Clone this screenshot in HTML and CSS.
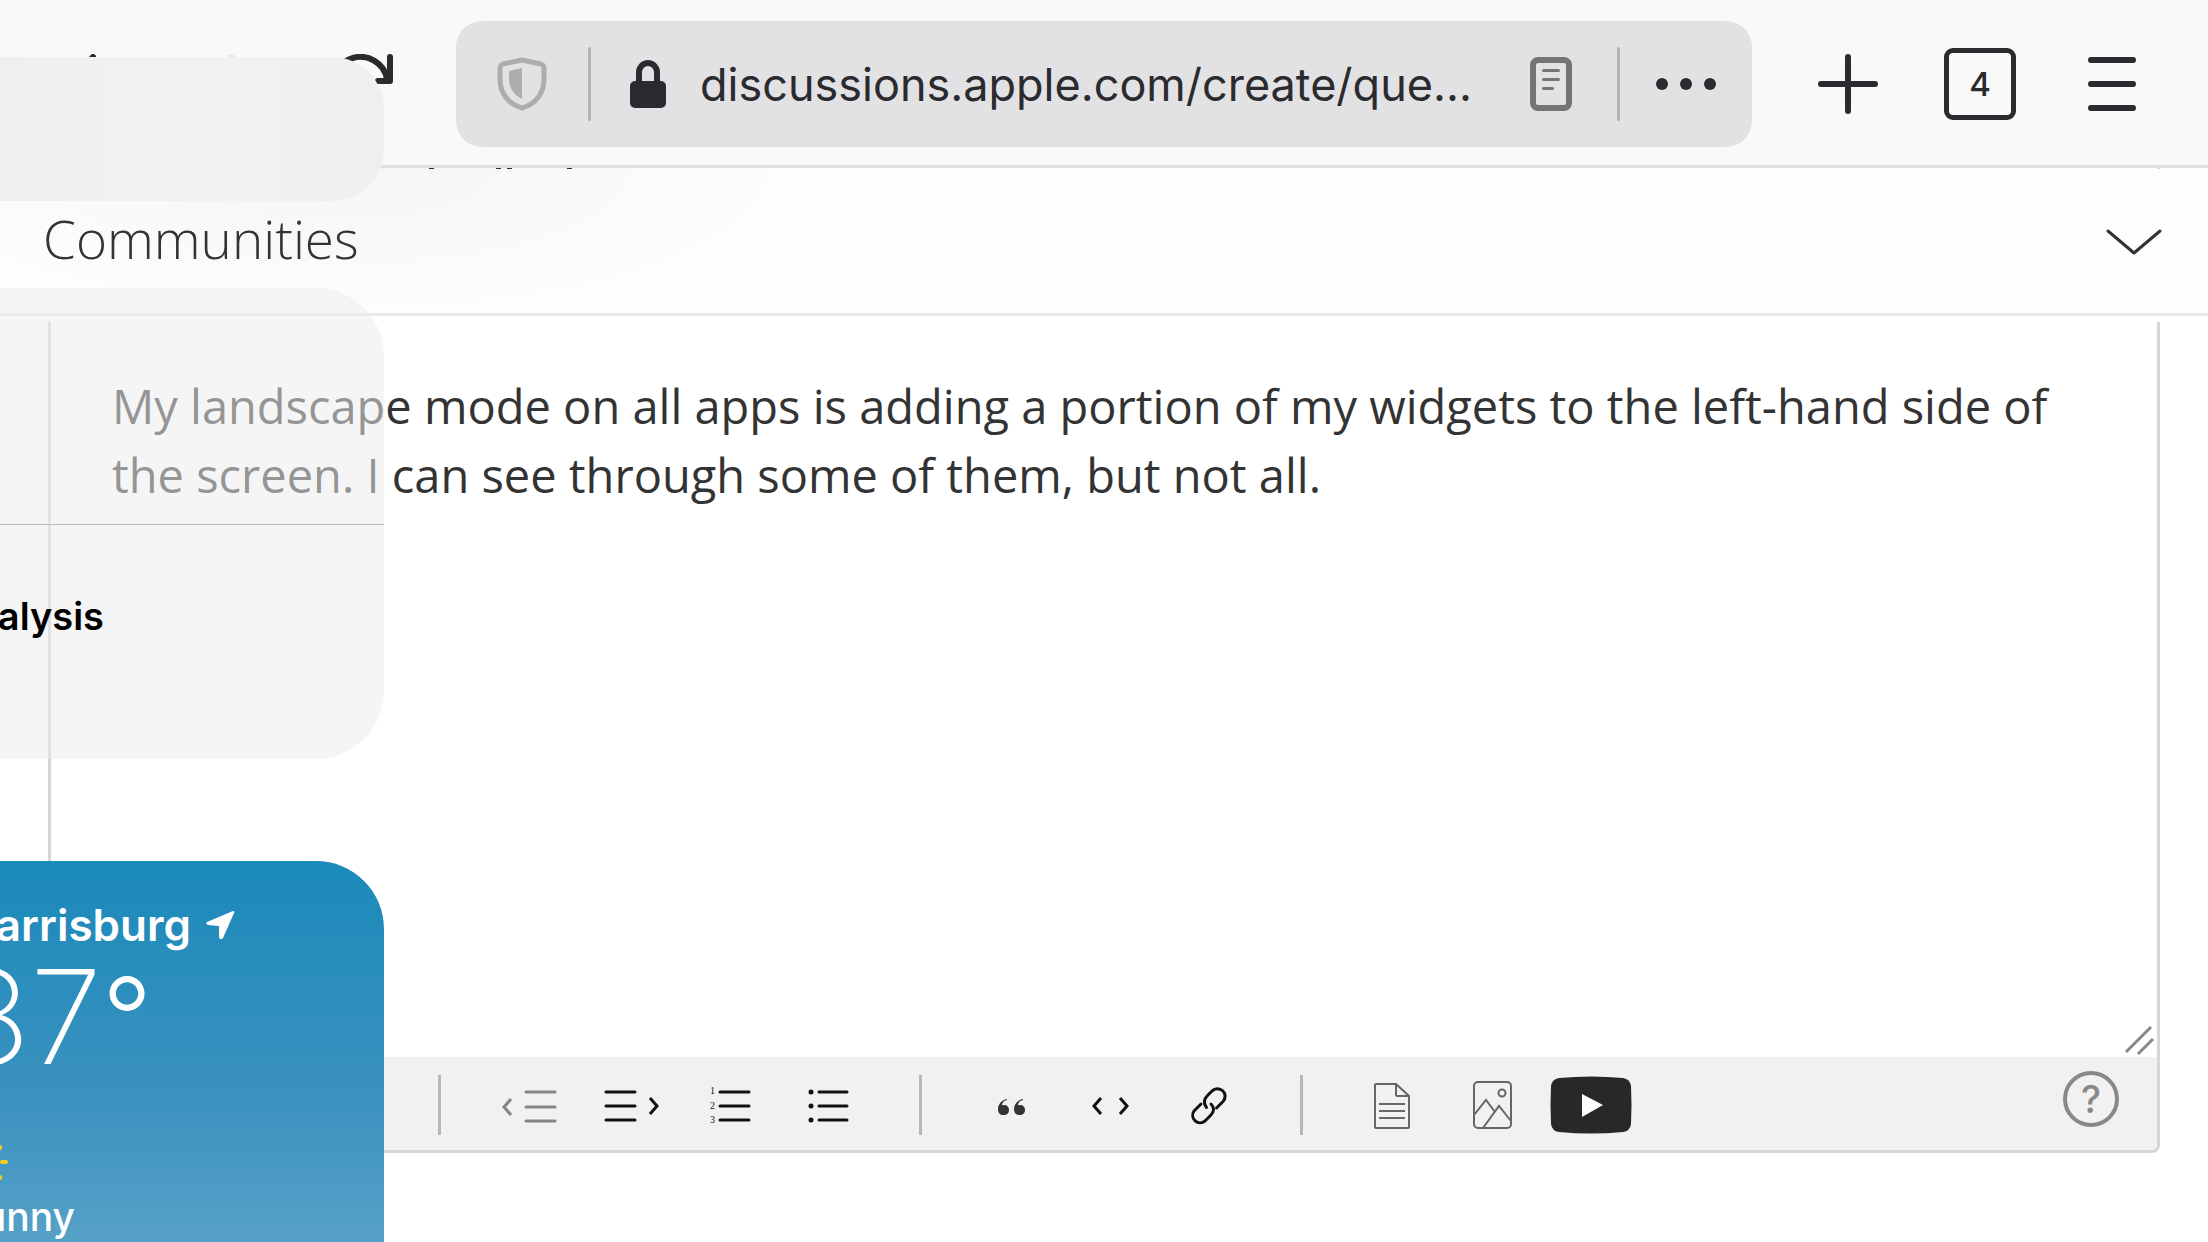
FILE: index.html
```html
<!DOCTYPE html>
<html lang="en">
<head>
<meta charset="utf-8">
<meta name="viewport" content="width=device-width, initial-scale=1">
<title>Communities</title>
<link rel="stylesheet" href="styles.css">
</head>
<body>
<header class="browser-bar">
  <div class="history">
    <button class="history-button" type="button" aria-label="Back"><svg width="60" height="60" viewBox="0 0 60 60"><path d="M31 3 8 30l23 27M8 30h48" fill="none" stroke="#2b2a2e" stroke-width="6" stroke-linecap="round"/></svg></button>
    <button class="history-button" type="button" aria-label="Forward" disabled><svg width="60" height="60" viewBox="0 0 60 60"><path d="m31 3 22 27-22 27M52 30H4" fill="none" stroke="#e6e6e8" stroke-width="6" stroke-linecap="round"/></svg></button>
    <button class="history-button" type="button" aria-label="Reload"><svg width="60" height="60" viewBox="0 0 60 60"><path d="M49 25A27 27 0 1 0 38 52" fill="none" stroke="#2b2a2e" stroke-width="6"/><path d="M52 3v24H40" fill="none" stroke="#2b2a2e" stroke-width="6" stroke-linecap="round" stroke-linejoin="round"/></svg></button>
  </div>
  <div class="address">
    <svg class="shield" width="50" height="54" viewBox="0 0 50 54"><path d="M25 3 44 7q3 1 3 4v11c0 14-8 25-22 29C11 47 3 36 3 22V11q0-3 3-4z" fill="none" stroke="#adadae" stroke-width="5" stroke-linejoin="round"/><path d="M25 11v31c-9-4-13-12-13-20V14z" fill="#adadae"/></svg>
    <span class="address-rule"></span>
    <svg class="lock" width="36" height="48" viewBox="0 0 36 48"><rect y="21" width="36" height="27" rx="5" fill="#2b2a2e"/><path d="M9 23V12.500a9 9.500 0 0 1 18 0V23" fill="none" stroke="#2b2a2e" stroke-width="6"/></svg>
    <input class="url" type="text" aria-label="Address" value="discussions.apple.com/create/que..." readonly>
    <button class="reader" type="button" aria-label="Reader view"><svg width="42" height="54" viewBox="0 0 42 54"><rect x="3" y="3" width="36" height="48" rx="5" fill="none" stroke="#747475" stroke-width="6"/><path d="M13.500 13.500h15M13.500 22.500h15M13.500 31.500h9" stroke="#747475" stroke-width="3" stroke-linecap="round"/></svg></button>
    <span class="address-rule"></span>
    <button class="more" type="button" aria-label="Page actions"><svg width="60" height="12" viewBox="0 0 60 12" fill="#2b2a2e"><circle cx="6" cy="6" r="6"/><circle cx="30" cy="6" r="6"/><circle cx="54" cy="6" r="6"/></svg></button>
  </div>
  <div class="window-tools">
    <button class="tool-button" type="button" aria-label="New tab"><svg width="60" height="60" viewBox="0 0 60 60"><path d="M30 3v54M3 30h54" stroke="#2b2a2e" stroke-width="6" stroke-linecap="round"/></svg></button>
    <button class="tabs" type="button" aria-label="Open tabs">4</button>
    <button class="tool-button menu" type="button" aria-label="Menu"><svg width="48" height="54" viewBox="0 0 48 54"><path d="M3 3h42M3 27h42M3 51h42" stroke="#2b2a2e" stroke-width="6" stroke-linecap="round"/></svg></button>
  </div>
</header>

<nav class="site-nav">
  <svg class="page-edge" width="1740" height="2" viewBox="0 0 1740 2"><path d="M0 0h5M67 0h5M78 0h5M138 0h5" stroke="#2b2a2e" stroke-width="2"/><path d="M1728 0h3" stroke="#d6d6d6" stroke-width="2"/></svg>
  <a class="site-name" href="#">Communities</a>
  <button class="expand" type="button" aria-label="Open menu"><svg width="56" height="28" viewBox="0 0 56 28"><path d="m2 3 26 22L54 3" fill="none" stroke="#333" stroke-width="3" stroke-linecap="round" stroke-linejoin="round"/></svg></button>
</nav>

<main class="page">
  <form class="editor">
    <div class="field">
      <textarea class="message" aria-label="Question details">My landscape mode on all apps is adding a portion of my widgets to the left-hand side of the screen. I can see through some of them, but not all.</textarea>
      <svg class="grip" width="32" height="32" viewBox="0 0 32 32"><path d="M3 28 28 3M15 30l15-15" stroke="#888" stroke-width="3"/></svg>
    </div>
    <div class="toolbar">
      <span class="rule"></span>
      <button class="format" type="button" aria-label="Decrease indent" disabled><svg width="100" height="60" viewBox="0 0 100 60"><path d="m31 24-7 8 7 8" fill="none" stroke="#858585" stroke-width="3"/><path d="M46 17h29M46 32h29M46 46h29" stroke="#858585" stroke-width="3" stroke-linecap="round"/></svg></button>
      <button class="format" type="button" aria-label="Increase indent"><svg width="100" height="60" viewBox="0 0 100 60"><path d="M26 17h29M26 31h29M26 45h29" stroke="#111" stroke-width="3" stroke-linecap="round"/><path d="m70 23 7 8-7 8" fill="none" stroke="#111" stroke-width="3"/></svg></button>
      <button class="format" type="button" aria-label="Numbered list"><svg width="100" height="60" viewBox="0 0 100 60"><path d="M40 17h29M40 31h29M40 45h29" stroke="#111" stroke-width="3" stroke-linecap="round"/><g class="list-digits"><text x="30" y="19">1</text><text x="30" y="34">2</text><text x="30" y="48">3</text></g></svg></button>
      <button class="format" type="button" aria-label="Bulleted list"><svg width="100" height="60" viewBox="0 0 100 60"><path d="M39 17h28M39 31h28M39 45h28" stroke="#111" stroke-width="3" stroke-linecap="round"/><g fill="#111"><circle cx="31" cy="17" r="2.500"/><circle cx="31" cy="31" r="2.500"/><circle cx="31" cy="45" r="2.500"/></g></svg></button>
      <span class="rule"></span>
      <button class="format" type="button" aria-label="Quote"><svg width="100" height="60" viewBox="0 0 100 60"><path d="M46 24c-5 1-9 5-9 10 0 4 2 6 5.500 6s5.500-2 5.500-5-2-5-5-5l-2 .500c0-3 2-5 5-5.500zM62 24c-5 1-9 5-9 10 0 4 2 6 5.500 6s5.500-2 5.500-5-2-5-5-5l-2 .500c0-3 2-5 5-5.500z" fill="#333"/></svg></button>
      <button class="format" type="button" aria-label="Code"><svg width="100" height="60" viewBox="0 0 100 60"><path d="m40 23-7 8 7 8M59 23l7 8-7 8" fill="none" stroke="#111" stroke-width="3"/></svg></button>
      <button class="format" type="button" aria-label="Link"><svg width="100" height="60" viewBox="0 0 100 60"><g fill="none" stroke="#111" stroke-width="3" stroke-linecap="round" stroke-linejoin="round"><path d="M55.500 33 62 26.500a7.500 7.500 0 0 0-11-10.500l-4.500 4.500c-4 4-4 8-1 12"/><path d="m40 29-7 7a7.500 7.500 0 0 0 11 10l5.500-5.500c4-4 4-8 .500-11.500"/></g></svg></button>
      <span class="rule"></span>
      <button class="format" type="button" aria-label="Attach file"><svg width="100" height="60" viewBox="0 0 100 60"><path d="M34 9h20l13 12v31q0 1-1 1H34q-1 0-1-1V10q0-1 1-1zM54 9v11q0 1 1 1h12" fill="none" stroke="#666" stroke-width="2"/><path d="M37 29h26M37 36h26M37 43h26" stroke="#666" stroke-width="2"/></svg></button>
      <button class="format" type="button" aria-label="Insert image"><svg width="100" height="60" viewBox="0 0 100 60"><g fill="none" stroke="#666" stroke-width="2"><rect x="32" y="7" width="37" height="46" rx="4"/><circle cx="60" cy="18" r="3.500"/><path d="m32 40 12-15 9 12M41 53l16-22 12 15"/></g></svg></button>
      <button class="format" type="button" aria-label="Insert video"><svg width="100" height="60" viewBox="0 0 100 60"><path d="M17 3q32-3 64 0 7 1 8 8 1 19 0 38-1 7-8 8-32 3-64 0-7-1-8-8-1-19 0-38 1-7 8-8z" fill="#282828"/><path d="m40 19 21 11-21 12z" fill="#fff"/></svg></button>
      <button class="help" type="button" aria-label="Help">?</button>
    </div>
  </form>
</main>

<aside class="widgets" aria-label="Widgets">
  <section class="widget search"></section>
  <section class="widget news">
    <div class="news-row"></div>
    <div class="news-row"><span class="news-title">alysis</span></div>
  </section>
  <section class="widget weather">
    <div class="place">arrisburg<svg class="arrow" width="30" height="30" viewBox="0 0 30 30"><path d="M28 1 2 12q-2 2 1 3l11 1v11q1 4 4 1L29 3q1-2-1-2z" fill="#fff"/></svg></div>
    <div class="degrees">87<span class="degree-sign">°</span></div>
    <svg class="sun" width="10" height="38" viewBox="0 0 10 38" stroke="#f8cd1c" stroke-width="4" stroke-linecap="round"><path d="M0 5V4M2 19h4M0 34v1"/></svg>
    <div class="sky">unny</div>
  </section>
</aside>
</body>
</html>
```
FILE: styles.css
```css
* {
  box-sizing: border-box;
}

body {
  position: relative;
  display: flex;
  flex-direction: column;
  min-height: 100vh;
  margin: 0;
  overflow: hidden;
  background: #fff;
  color: #333;
  font-family: Inter, "Liberation Sans", sans-serif;
}

button {
  display: flex;
  align-items: center;
  justify-content: center;
  margin: 0;
  padding: 0;
  border: 0;
  background: none;
  color: inherit;
}

svg {
  display: block;
}

/* Browser bar */
.browser-bar {
  display: flex;
  align-items: center;
  height: 168px;
  padding-top: 3px;
  border-bottom: 3px solid #dfdfe0;
  background: #f9f9f9;
}

.history,
.window-tools {
  display: flex;
  flex: 0 0 456px;
  align-items: center;
}

.history {
  gap: 78px;
  padding-left: 62px;
}

.window-tools {
  gap: 66px;
  padding-left: 66px;
}

.menu {
  margin-left: 6px;
}

.address {
  display: flex;
  flex: 1;
  align-items: center;
  min-width: 0;
  height: 126px;
  padding: 0 36px 0 41px;
  border-radius: 26px;
  background: #e2e2e4;
}

.address-rule {
  width: 3px;
  height: 74px;
  border-radius: 2px;
  background: #b1b1b3;
}

.shield {
  margin-right: 41px;
}

.lock {
  margin: 0 34px 0 39px;
}

.url {
  flex: 1;
  min-width: 0;
  padding: 2px 0 0;
  border: 0;
  outline: 0;
  background: none;
  color: #2b2a2e;
  font-family: Inter, sans-serif;
  font-size: 45px;
  line-height: 60px;
}

.reader {
  margin: 0 45px 0 24px;
}

.more {
  margin-left: 36px;
}

.tabs {
  width: 72px;
  height: 72px;
  border: 5px solid #2b2a2e;
  border-radius: 9px;
  color: #2b2a2e;
  font-family: Inter, sans-serif;
  font-size: 33px;
  font-weight: 500;
  line-height: 36px;
}

/* Site navigation */
.site-nav {
  position: relative;
  display: flex;
  align-items: center;
  justify-content: space-between;
  height: 148px;
  padding: 2px 46px 0 43px;
  border-bottom: 3px solid #e8e8e8;
  background: radial-gradient(ellipse 460px 150px at 340px 0, #f5f5f5, #fdfdfd);
}

.page-edge {
  position: absolute;
  top: 0;
  left: 429px;
}

.site-name {
  padding-bottom: 6px;
  color: #333;
  font-family: "Open Sans", "Noto Sans", sans-serif;
  font-size: 53px;
  font-weight: 300;
  line-height: 72px;
  text-decoration: none;
}

/* Editor */
.page {
  display: flex;
  flex: 1;
  flex-direction: column;
  padding: 6px 48px 89px;
}

.editor {
  display: flex;
  flex: 1;
  flex-direction: column;
  margin: 0;
  border: 3px solid #d6d6d6;
  border-top: 0;
  border-radius: 0 0 8px 8px;
  overflow: hidden;
}

.field {
  position: relative;
  display: flex;
  flex: 1;
}

.message {
  flex: 1;
  padding: 50px 61px;
  border: 0;
  outline: 0;
  resize: none;
  background: #fff;
  color: #333;
  font-family: "Open Sans", "Noto Sans", sans-serif;
  font-size: 47px;
  line-height: 69px;
}

.grip {
  position: absolute;
  right: 2px;
  bottom: 1px;
}

.toolbar {
  display: flex;
  align-items: center;
  height: 93px;
  padding: 3px 38px 0 348px;
  background: #f1f1f1;
}

.rule {
  width: 3px;
  height: 60px;
  margin: 0 39px;
  background: #b7b7b7;
}

.format {
  width: 100px;
  height: 60px;
}

.list-digits {
  fill: #111;
  font-family: "Liberation Serif", serif;
  font-size: 10px;
}

.help {
  width: 56px;
  height: 56px;
  margin: 0 0 12px auto;
  border: 4px solid #888;
  border-radius: 50%;
  color: #888;
  font-family: Inter, sans-serif;
  font-size: 38px;
  font-weight: 500;
  line-height: 40px;
}

/* Widgets lying over the page */
.widgets {
  position: absolute;
  top: 57px;
  bottom: 0;
  left: 0;
  display: flex;
  flex-direction: column;
  width: 384px;
}

.widget {
  overflow: hidden;
}

.search {
  height: 144px;
  margin-bottom: 87px;
  border-radius: 0 52px 52px 0;
  background: linear-gradient(90deg, #efeff0, #f2f2f4 50%, #efeff0);
}

.news {
  height: 471px;
  margin-bottom: 102px;
  border-radius: 0 68px 68px 0;
  background: rgba(236, 236, 236, 0.53);
}

.news-row {
  display: flex;
  align-items: center;
  height: 236px;
  padding-bottom: 54px;
}

.news-row + .news-row {
  border-top: 1px solid #b9babc;
}

.news-title {
  display: flex;
  justify-content: flex-end;
  width: 104px;
  color: #000;
  font-size: 38px;
  font-weight: 600;
  line-height: 48px;
}

.weather {
  flex: 1;
  padding-top: 38px;
  border-radius: 0 68px 0 0;
  background: linear-gradient(#1a8aba, #3a91bf 60%, #56a1c8);
  color: #fff;
}

.place {
  display: flex;
  align-items: center;
  justify-content: flex-end;
  width: 235px;
  font-size: 44px;
  font-weight: 600;
  line-height: 52px;
}

.arrow {
  flex: none;
  margin-left: 14px;
}

.degrees {
  display: flex;
  justify-content: flex-end;
  width: 152px;
  font-size: 130px;
  font-weight: 200;
  line-height: 132px;
}

.degree-sign {
  font-size: 110px;
  font-weight: 300;
}

.sun {
  margin: 60px 0 12px;
}

.sky {
  display: flex;
  justify-content: flex-end;
  width: 75px;
  font-size: 39px;
  font-weight: 500;
  line-height: 48px;
}
```
